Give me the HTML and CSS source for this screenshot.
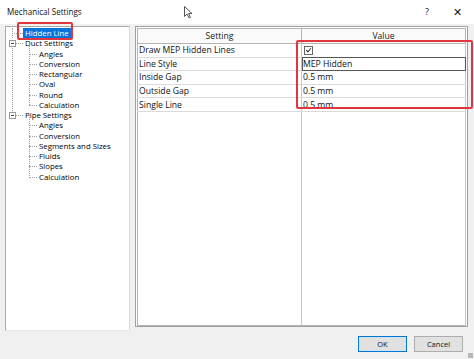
FILE: index.html
```html
<!DOCTYPE html>
<html lang="en">
<head>
    <meta charset="UTF-8">
    <title>Mechanical Settings</title>
    <link rel="stylesheet" href="styles.css">
</head>
<body>
    <div class="dialog">
        <div class="titlebar">
            <span class="title">Mechanical Settings</span>
            <span class="title-btns">
                <span class="help">?</span>
                <span class="close">&#x2715;</span>
            </span>
            <svg class="cursor" width="9" height="13" viewBox="0 0 9 13">
                <path d="M0.5 0.5 L0.5 10.5 L3 8 L5 12 L6.5 11.3 L4.6 7.5 L8 7.5 Z" fill="#fff" stroke="#555" stroke-width="1"/>
            </svg>
        </div>

        <div class="content">
            <div class="tree-panel">
                <ul class="tree">
                    <li class="node first">
                        <span class="label selected">Hidden Line</span>
                        <span class="mark mark-tree"></span>
                    </li>
                    <li class="node">
                        <span class="toggle"></span>
                        <span class="label">Duct Settings</span>
                        <ul class="children">
                            <li><span class="label">Angles</span></li>
                            <li><span class="label">Conversion</span></li>
                            <li><span class="label">Rectangular</span></li>
                            <li><span class="label">Oval</span></li>
                            <li><span class="label">Round</span></li>
                            <li><span class="label">Calculation</span></li>
                        </ul>
                    </li>
                    <li class="node last">
                        <span class="toggle"></span>
                        <span class="label">Pipe Settings</span>
                        <ul class="children">
                            <li><span class="label">Angles</span></li>
                            <li><span class="label">Conversion</span></li>
                            <li><span class="label">Segments and Sizes</span></li>
                            <li><span class="label">Fluids</span></li>
                            <li><span class="label">Slopes</span></li>
                            <li><span class="label">Calculation</span></li>
                        </ul>
                    </li>
                </ul>
            </div>

            <div class="grid-panel">
                <table class="grid">
                    <thead>
                        <tr><th>Setting</th><th>Value</th></tr>
                    </thead>
                    <tbody>
                        <tr><td>Draw MEP Hidden Lines</td><td><span class="check"></span></td></tr>
                        <tr><td>Line Style</td><td class="active">MEP Hidden</td></tr>
                        <tr><td>Inside Gap</td><td>0.5 mm</td></tr>
                        <tr><td>Outside Gap</td><td>0.5 mm</td></tr>
                        <tr><td>Single Line</td><td>0.5 mm</td></tr>
                        <tr class="filler"><td></td><td></td></tr>
                    </tbody>
                </table>
                <span class="mark mark-values"></span>
            </div>
        </div>

        <div class="footer">
            <button class="btn default">OK</button>
            <button class="btn">Cancel</button>
            <span class="grip"></span>
        </div>
    </div>
</body>
</html>
```

FILE: styles.css
```css
* {
    margin: 0;
    padding: 0;
    box-sizing: border-box;
}

body {
    font-family: 'Open Sans', 'Noto Sans', sans-serif;
    background: #f0f0f0;
    color: #111;
}

.dialog {
    width: 474px;
    height: 359px;
    display: flex;
    flex-direction: column;
    background: #f0f0f0;
}

/* title bar */
.titlebar {
    position: relative;
    height: 24px;
    background: #fff;
    display: flex;
    align-items: center;
    justify-content: space-between;
    padding: 0 12px 2px 7px;
    font-size: 8.1px;
}

.title-btns {
    display: flex;
    gap: 24px;
    align-items: center;
}

.help {
    font-size: 9px;
}

.close {
    font-size: 11px;
    font-weight: 300;
}

.cursor {
    position: absolute;
    left: 184px;
    top: 6px;
}

/* main area */
.content {
    flex: 1;
    display: flex;
    gap: 5px;
    padding: 2px 6px 0 5px;
    align-items: flex-start;
}

.tree-panel {
    position: relative;
    width: 125px;
    height: 305px;
    background: #fff;
    border: 1px solid #a9a9a9;
    border-right-color: #dcdcdc;
    border-bottom-color: #e8e8e8;
}

.tree {
    list-style: none;
    position: relative;
    padding-top: 1px;
    font-size: 7.8px;
    line-height: 10.25px;
    color: #000;
}

.tree ul {
    list-style: none;
}

.tree .label {
    display: inline-block;
    height: 10.25px;
    padding: 0 2px;
    white-space: nowrap;
    vertical-align: top;
}

.tree .selected {
    background: #0a74da;
    color: #fff;
    padding: 0 2px 0 2px;
}

.node {
    position: relative;
    padding-left: 17px;
}

.node::before {
    content: "";
    position: absolute;
    left: 6px;
    top: 5px;
    width: 11px;
    border-top: 1px dotted #a0a0a0;
}

.node::after {
    content: "";
    position: absolute;
    left: 6px;
    top: 5px;
    height: 100%;
    border-left: 1px dotted #a0a0a0;
}

.node.first::after {
    top: 0;
}

.node.last::after {
    display: none;
}

.toggle {
    position: absolute;
    left: 3px;
    top: 2px;
    width: 7px;
    height: 7px;
    border: 1px solid #9a9a9a;
    background: #fff;
    z-index: 1;
}

.toggle::before {
    content: "";
    position: absolute;
    left: 1px;
    top: 2px;
    width: 3px;
    border-top: 1px solid #444;
}

.children {
    position: relative;
    padding-left: 14px;
}

.children::before {
    content: "";
    position: absolute;
    left: 6px;
    top: -5px;
    height: 61px;
    border-left: 1px dotted #a0a0a0;
}

.children li {
    position: relative;
}

.children li::before {
    content: "";
    position: absolute;
    left: -8px;
    top: 5px;
    width: 8px;
    border-top: 1px dotted #a0a0a0;
}

/* annotation boxes */
.mark {
    position: absolute;
    border: 2px solid #e2363f;
    border-radius: 2px;
    pointer-events: none;
}

.mark-tree {
    left: 11px;
    top: -6px;
    width: 56px;
    height: 18px;
}

.mark-values {
    left: 160px;
    top: 13px;
    width: 177px;
    height: 69px;
}

/* property grid */
.grid-panel {
    position: relative;
    width: 333px;
    height: 301px;
    border: 1px solid #a0a0a0;
    background: #fff;
    padding: 1px 1px 0 1px;
}

.grid {
    width: 100%;
    height: 100%;
    border-collapse: collapse;
    table-layout: fixed;
    font-size: 8.65px;
}

.grid th {
    font-weight: normal;
    height: 15px;
    background: #fafafa;
    border: 1px solid #b4b4b4;
    text-align: center;
    color: #222;
}

.grid td {
    height: 13.6px;
    padding: 0 1px;
    border-bottom: 1px solid #dadada;
    border-right: 1px solid #c8c8c8;
    white-space: nowrap;
    vertical-align: middle;
}

.grid td:first-child {
    border-left: 1px solid #b4b4b4;
}

.grid td.active {
    outline: 1px solid #555;
    outline-offset: -1px;
}

.grid .filler td {
    height: auto;
    border-bottom: 1px solid #b4b4b4;
}

.check {
    display: inline-block;
    position: relative;
    width: 9px;
    height: 9px;
    border: 1px solid #666;
    background: #fff;
    vertical-align: middle;
    margin-left: 1px;
}

.check::after {
    content: "";
    position: absolute;
    left: 2px;
    top: 0px;
    width: 2px;
    height: 4px;
    border-right: 1px solid #333;
    border-bottom: 1px solid #333;
    transform: rotate(40deg);
}

/* footer */
.footer {
    position: relative;
    height: 28px;
    display: flex;
    justify-content: flex-end;
    align-items: flex-start;
    gap: 7px;
    padding: 5px 11px 0 0;
}

.btn {
    width: 49px;
    height: 16px;
    font-family: 'Open Sans', sans-serif;
    font-size: 7.5px;
    background: #e1e1e1;
    border: 1px solid #adadad;
    color: #111;
}

.btn.default {
    border: 1px solid #0078d7;
    box-shadow: inset 0 0 0 1px #cfe3f5;
}

.grip {
    position: absolute;
    right: 1px;
    bottom: 1px;
    width: 5px;
    height: 5px;
    background: radial-gradient(circle, #b8b8b8 0.7px, transparent 1px) 0 0 / 2px 2px;
}
```
